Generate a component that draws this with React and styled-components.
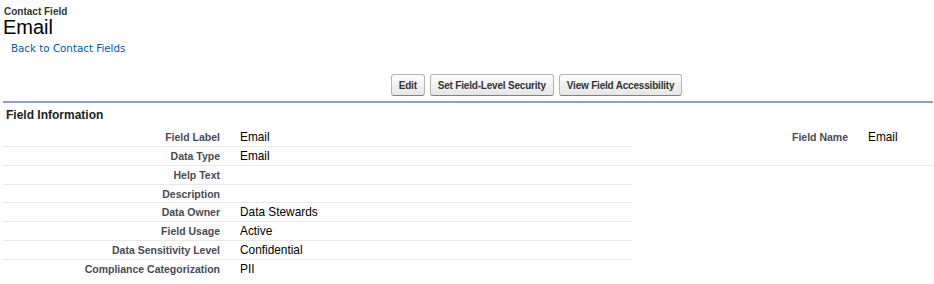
import React from "react";
import styled, { createGlobalStyle } from "styled-components";

const GlobalStyle = createGlobalStyle`
  body {
    margin: 0;
    background: #fff;
    font-family: "Liberation Sans", Arial, sans-serif;
  }
`;

const Page = styled.div`
  width: 934px;
  box-sizing: border-box;
  padding: 0 1px 0 3px;
`;

const PageType = styled.div`
  margin-top: 6px;
  padding-left: 1px;
  font-size: 10px;
  line-height: 12px;
  font-weight: bold;
  color: #333;
`;

const PageTitle = styled.h1`
  margin: 0;
  font-size: 20px;
  line-height: 18px;
  font-weight: normal;
  color: #000;
`;

const Breadcrumb = styled.a`
  display: block;
  margin-top: 5px;
  padding-left: 8px;
  font-family: "DejaVu Sans", Verdana, sans-serif;
  font-size: 10.3px;
  line-height: 14px;
  color: #015ba7;
  text-decoration: none;
`;

const ButtonBar = styled.div`
  display: flex;
  justify-content: center;
  gap: 5px;
  margin-top: 19px;
  padding-left: 137px;
`;

const Button = styled.button`
  height: 22px;
  padding: 0 7px;
  border: 1px solid #b5b5b5;
  border-bottom-color: #7f7f7f;
  border-radius: 3px;
  background: linear-gradient(#ffffff, #f4f4f4 40%, #e6e6e6);
  font-family: "Liberation Sans", Arial, sans-serif;
  font-size: 10px;
  letter-spacing: -0.2px;
  font-weight: bold;
  color: #333;
`;

const Block = styled.div`
  margin-top: 5px;
  border-top: 2px solid #8e9dc2;
`;

const SectionTitle = styled.h3`
  margin: 4px 0 0;
  padding-left: 3px;
  font-size: 12px;
  line-height: 16px;
  font-weight: bold;
  color: #222;
`;

const Columns = styled.div`
  display: flex;
  margin-top: 5px;
`;

const LeftCol = styled.div`
  width: 629px;
`;

const RightCol = styled.div`
  flex: 1;
`;

const Row = styled.div`
  display: flex;
  box-sizing: border-box;
  height: ${(p) => p.$h || 18.85}px;
  border-bottom: ${(p) => (p.$last ? "none" : "1px solid #e8e8e8")};
`;

const Label = styled.div`
  width: ${(p) => p.$w}px;
  flex-shrink: 0;
  box-sizing: border-box;
  padding: 2px 10px 0 2px;
  text-align: right;
  font-size: 10.5px;
  line-height: 14px;
  font-weight: bold;
  color: #4a4a56;
`;

const Value = styled.div`
  flex: 1;
  padding: 2px 10px 0;
  font-size: 11.85px;
  line-height: 14px;
  color: #000;
`;

const fields = [
  ["Field Label", "Email"],
  ["Data Type", "Email"],
  ["Help Text", ""],
  ["Description", ""],
  ["Data Owner", "Data Stewards"],
  ["Field Usage", "Active"],
  ["Data Sensitivity Level", "Confidential"],
  ["Compliance Categorization", "PII"],
];

export default function App() {
  return (
    <Page>
      <GlobalStyle />
      <PageType>Contact Field</PageType>
      <PageTitle>Email</PageTitle>
      <Breadcrumb href="#">Back to Contact Fields</Breadcrumb>
      <ButtonBar>
        <Button>Edit</Button>
        <Button>Set Field-Level Security</Button>
        <Button>View Field Accessibility</Button>
      </ButtonBar>
      <Block>
        <SectionTitle>Field Information</SectionTitle>
        <Columns>
          <LeftCol>
            {fields.map(([label, value], i) => (
              <Row key={label} $last={i === fields.length - 1}>
                <Label $w={227}>{label}</Label>
                <Value>{value}</Value>
              </Row>
            ))}
          </LeftCol>
          <RightCol>
            <Row $h={38}>
              <Label $w={226}>Field Name</Label>
              <Value>Email</Value>
            </Row>
          </RightCol>
        </Columns>
      </Block>
    </Page>
  );
}
